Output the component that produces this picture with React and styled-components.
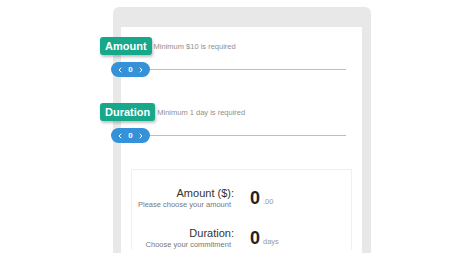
import styled, { createGlobalStyle } from "styled-components";
import { ChevronLeft, ChevronRight } from "lucide-react";

const GlobalStyle = createGlobalStyle`
    html, body {
        margin: 0;
        padding: 0;
        background: #fff;
        overflow: hidden;
        font-family: "Liberation Sans", Arial, sans-serif;
    }
`

const sliders = [
    { label: "Amount", hint: "Minimum $10 is required" },
    { label: "Duration", hint: "Minimum 1 day is required" },
];

const summary = [
    { title: "Amount ($):", sub: "Please choose your amount", unit: ".00" },
    { title: "Duration:", sub: "Choose your commitment", unit: "days" },
];

const App = () => {
    return (
        <StyledPage>
            <GlobalStyle />
            <StyledFrame>
                <StyledSheet>
                    {sliders.map((s) => (
                        <StyledField key={s.label}>
                            <StyledHead>
                                <StyledTag>{s.label}</StyledTag>
                                <StyledHint>{s.hint}</StyledHint>
                            </StyledHead>
                            <StyledTrack>
                                <StyledKnob>
                                    <ChevronLeft size={8} strokeWidth={3} />
                                    <span>0</span>
                                    <ChevronRight size={8} strokeWidth={3} />
                                </StyledKnob>
                            </StyledTrack>
                        </StyledField>
                    ))}
                    <StyledCard>
                        {summary.map((row) => (
                            <StyledRow key={row.title}>
                                <StyledLabel>
                                    <StyledTitle>{row.title}</StyledTitle>
                                    <StyledSub>{row.sub}</StyledSub>
                                </StyledLabel>
                                <StyledValue>
                                    <StyledNum>0</StyledNum>
                                    <StyledUnit>{row.unit}</StyledUnit>
                                </StyledValue>
                            </StyledRow>
                        ))}
                    </StyledCard>
                </StyledSheet>
            </StyledFrame>
        </StyledPage>
    );
}

const StyledPage = styled.div`
    height: 253px;
    padding: 7px 0 0 113px;
    box-sizing: border-box;
`
const StyledFrame = styled.div`
    width: 258px;
    height: 100%;
    box-sizing: border-box;
    background: #e8e8e8;
    border-radius: 6px 6px 0 0;
    padding: 20px 9px 0 8px;
`
const StyledSheet = styled.div`
    background: #fff;
    height: 100%;
    padding-top: 10px;
    box-sizing: border-box;
`
const StyledField = styled.div`
    display: flex;
    flex-direction: column;
    gap: 7px;
    margin-bottom: 26px;
`
const StyledHead = styled.div`
    display: flex;
    align-items: center;
    gap: 2px;
`
const StyledTag = styled.div`
    margin-left: -21px;
    height: 18px;
    padding: 0 5px;
    display: flex;
    align-items: center;
    background: #17a78b;
    color: #fff;
    font-weight: bold;
    font-size: 11px;
    border-radius: 3px;
    box-shadow: 1px 2px 3px rgba(0, 0, 0, 0.25);
`
const StyledHint = styled.div`
    font-size: 7.5px;
    color: #8f8f8f;
    padding-top: 1px;
`
const StyledTrack = styled.div`
    display: flex;
    align-items: center;
    margin: 0 16px 0 -10px;
    background: linear-gradient(#bdbdbd, #bdbdbd) no-repeat left center / 100% 1px;
`
const StyledKnob = styled.div`
    width: 39px;
    height: 15px;
    border-radius: 8px;
    background: #3592d8;
    color: #fff;
    display: flex;
    align-items: center;
    justify-content: center;
    gap: 4px;
    font-size: 8px;
    font-weight: bold;
`
const StyledCard = styled.div`
    margin: 0 10px;
    border: 1px solid #f0f0f0;
    border-bottom: none;
    padding-top: 17px;
    display: flex;
    flex-direction: column;
    gap: 17px;
`
const StyledRow = styled.div`
    display: grid;
    grid-template-columns: 102px auto;
    column-gap: 16px;
    align-items: center;
`
const StyledLabel = styled.div`
    text-align: right;
`
const StyledTitle = styled.div`
    font-size: 11px;
    color: #333;
    line-height: 13px;
`
const StyledSub = styled.div`
    font-size: 7.5px;
    color: #777;
    line-height: 10px;
    padding-right: 3px;
`
const StyledValue = styled.div`
    display: flex;
    align-items: baseline;
    gap: 3px;
`
const StyledNum = styled.span`
    font-size: 18px;
    font-weight: bold;
    color: #222;
`
const StyledUnit = styled.span`
    font-size: 7.5px;
    color: #999;
`
export default App;
